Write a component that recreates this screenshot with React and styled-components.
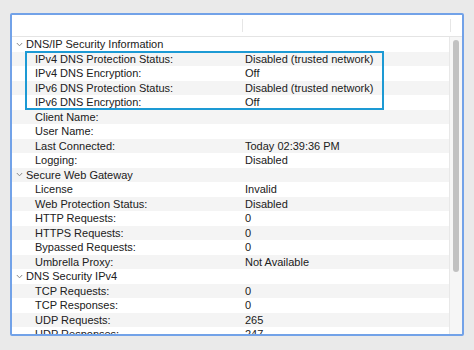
import React from 'react';
import styled, { createGlobalStyle } from 'styled-components';

const ROWS = [
    { group: true, label: 'DNS/IP Security Information' },
    { label: 'IPv4 DNS Protection Status:', value: 'Disabled (trusted network)' },
    { label: 'IPv4 DNS Encryption:', value: 'Off' },
    { label: 'IPv6 DNS Protection Status:', value: 'Disabled (trusted network)' },
    { label: 'IPv6 DNS Encryption:', value: 'Off' },
    { label: 'Client Name:', value: '' },
    { label: 'User Name:', value: '' },
    { label: 'Last Connected:', value: 'Today 02:39:36 PM' },
    { label: 'Logging:', value: 'Disabled' },
    { group: true, label: 'Secure Web Gateway' },
    { label: 'License', value: 'Invalid' },
    { label: 'Web Protection Status:', value: 'Disabled' },
    { label: 'HTTP Requests:', value: '0' },
    { label: 'HTTPS Requests:', value: '0' },
    { label: 'Bypassed Requests:', value: '0' },
    { label: 'Umbrella Proxy:', value: 'Not Available' },
    { group: true, label: 'DNS Security IPv4' },
    { label: 'TCP Requests:', value: '0' },
    { label: 'TCP Responses:', value: '0' },
    { label: 'UDP Requests:', value: '265' },
    { label: 'UDP Responses:', value: '247' },
];

const ROW_HEIGHT = 14.5;

function Chevron() {
    return (
        <svg width="7" height="5" viewBox="0 0 7 5">
            <path d="M0.8 1 L3.5 3.8 L6.2 1" fill="none" stroke="#8a8a8a" strokeWidth="1" />
        </svg>
    );
}

function App() {
    return (
        <Frame>
            <GlobalStyle />
            <Panel>
                <Header>
                    <HeaderCell $width={230} />
                    <HeaderCell $width={207} />
                    <HeaderCell />
                </Header>
                <Body>
                    <Rows>
                        {ROWS.map((row, i) => (
                            <Row key={i} $striped={i % 2 === 1}>
                                {row.group ? (
                                    <GroupLabel>
                                        <Chevron />
                                        <span>{row.label}</span>
                                    </GroupLabel>
                                ) : (
                                    <>
                                        <Label>{row.label}</Label>
                                        <Value>{row.value}</Value>
                                    </>
                                )}
                            </Row>
                        ))}
                        <Highlight />
                    </Rows>
                    <ScrollTrack>
                        <ScrollThumb />
                    </ScrollTrack>
                </Body>
            </Panel>
        </Frame>
    );
}

export default App;

const GlobalStyle = createGlobalStyle`
  html, body {
    margin: 0;
    background: #eaeaea;
  }
  body {
    font-family: "Liberation Sans", Arial, sans-serif;
    font-size: 11px;
    color: #202020;
  }
`;

const Frame = styled.div`
  padding: 13px 10px 0 10px;
  height: 350px;
  box-sizing: border-box;
  overflow: hidden;
`;

const Panel = styled.div`
  width: 454px;
  height: 323px;
  box-sizing: border-box;
  border: 2px solid #72a2e8;
  border-radius: 2px;
  background: #fff;
  display: flex;
  flex-direction: column;
  overflow: hidden;
`;

const Header = styled.div`
  height: 22px;
  flex-shrink: 0;
  display: flex;
  border-bottom: 1px solid #e4e4e4;
  box-sizing: border-box;
  padding: 4px 0;
`;

const HeaderCell = styled.div`
  width: ${p => (p.$width ? `${p.$width}px` : 'auto')};
  flex: ${p => (p.$width ? 'none' : '1')};
  border-right: 1px solid #e6e6e6;
  &:last-child {
    border-right: none;
  }
`;

const Body = styled.div`
  flex: 1;
  display: flex;
  min-height: 0;
`;

const Rows = styled.div`
  position: relative;
  flex: 1;
  overflow: hidden;
`;

const Row = styled.div`
  height: ${ROW_HEIGHT}px;
  display: flex;
  align-items: center;
  background: ${p => (p.$striped ? '#f4f4f4' : '#fff')};
  white-space: nowrap;
`;

const GroupLabel = styled.div`
  display: flex;
  align-items: center;
  gap: 3px;
  padding-left: 4px;
`;

const Label = styled.div`
  width: 230px;
  padding-left: 23px;
  box-sizing: border-box;
`;

const Value = styled.div`
  padding-left: 3px;
`;

const Highlight = styled.div`
  position: absolute;
  left: 13px;
  top: ${ROW_HEIGHT - 1}px;
  width: 359px;
  height: ${ROW_HEIGHT * 4 + 1}px;
  box-sizing: border-box;
  border: 2px solid #1d9ad4;
  pointer-events: none;
`;

const ScrollTrack = styled.div`
  width: 13px;
  flex-shrink: 0;
  background: #f6f6f6;
  border-left: 1px solid #e8e8e8;
  box-sizing: border-box;
  padding: 3px 0 0 3px;
`;

const ScrollThumb = styled.div`
  width: 6px;
  height: 232px;
  border-radius: 3px;
  background: #c1c1c1;
`;
